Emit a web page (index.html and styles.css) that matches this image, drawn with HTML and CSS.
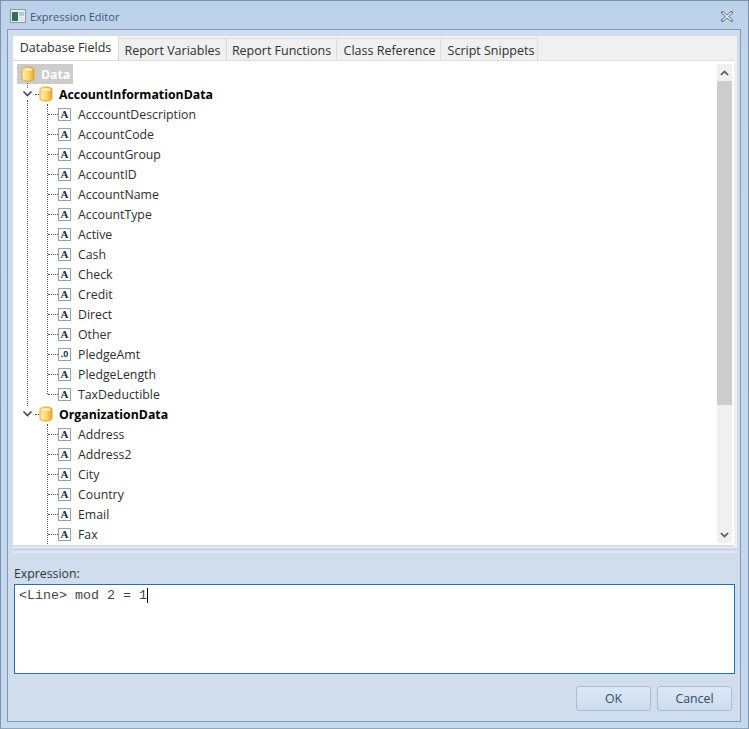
FILE: index.html
```html
<!DOCTYPE html>
<html lang="en">
<head>
<meta charset="utf-8">
<title>Expression Editor</title>
<link rel="stylesheet" href="styles.css">
</head>
<body>
<svg class="defs" width="0" height="0" aria-hidden="true">
  <defs>
    <linearGradient id="dbfill" x1="0" y1="0" x2="1" y2="0">
      <stop offset="0" stop-color="#fff2b8"/>
      <stop offset="0.55" stop-color="#fbd566"/>
      <stop offset="1" stop-color="#eba92e"/>
    </linearGradient>
    <symbol id="db" viewBox="0 0 14 16">
      <path d="M1 3.500C1 1.900 3.700 1 7 1s6 .9 6 2.500v9C13 14.100 10.300 15 7 15s-6-.9-6-2.500z" fill="url(#dbfill)" stroke="#e3a32e"/>
      <ellipse cx="7" cy="3.600" rx="4.500" ry="1.700" fill="#fff6d2" stroke="#ecc060" stroke-width=".6"/>
    </symbol>
  </defs>
</svg>
<div class="window">
  <header class="titlebar">
    <svg class="appicon" width="16" height="14" viewBox="0 0 16 14"><rect x=".5" y=".5" width="15" height="13" fill="#e8eeee" stroke="#8d9a9a"/><rect x="2" y="3" width="6" height="9" fill="#2f6f63"/><rect x="9" y="3" width="5" height="4" fill="#b9c6d6"/><rect x="9" y="8" width="5" height="4" fill="#dfe6ea"/></svg>
    <span class="title">Expression Editor</span>
    <svg class="close" width="12" height="11" viewBox="0 0 12 11"><path d="M1.500 1.500l9 8M10.500 1.500l-9 8" stroke="#5f7488" stroke-width="3" stroke-linecap="square"/><path d="M1.500 1.500l9 8M10.500 1.500l-9 8" stroke="#f4f7fa" stroke-width="1.300"/></svg>
  </header>
  <main class="panel">
    <section class="tabs">
      <nav class="tabstrip">
        <span class="tab active">Database Fields</span>
        <span class="tab t2">Report Variables</span>
        <span class="tab t3">Report Functions</span>
        <span class="tab t4">Class Reference</span>
        <span class="tab t5">Script Snippets</span>
      </nav>
      <div class="tabbody">
        <div class="tree">
          <div class="row root"><span class="rootsel"><svg class="dbicon"><use href="#db"/></svg><b>Data</b></span></div>
          <div class="group g1">
            <div class="row parent"><svg class="chev" width="11" height="8" viewBox="0 0 11 8"><path d="M1.500 1.500l4 4 4-4" fill="none" stroke="#444" stroke-width="1.600"/></svg><span class="hdots"></span><svg class="dbicon"><use href="#db"/></svg><b>AccountInformationData</b></div>
            <div class="children">
              <div class="row leaf"><span class="ficon">A</span>AcccountDescription</div>
              <div class="row leaf"><span class="ficon">A</span>AccountCode</div>
              <div class="row leaf"><span class="ficon">A</span>AccountGroup</div>
              <div class="row leaf"><span class="ficon">A</span>AccountID</div>
              <div class="row leaf"><span class="ficon">A</span>AccountName</div>
              <div class="row leaf"><span class="ficon">A</span>AccountType</div>
              <div class="row leaf"><span class="ficon">A</span>Active</div>
              <div class="row leaf"><span class="ficon">A</span>Cash</div>
              <div class="row leaf"><span class="ficon">A</span>Check</div>
              <div class="row leaf"><span class="ficon">A</span>Credit</div>
              <div class="row leaf"><span class="ficon">A</span>Direct</div>
              <div class="row leaf"><span class="ficon">A</span>Other</div>
              <div class="row leaf"><span class="ficon num">.0</span>PledgeAmt</div>
              <div class="row leaf"><span class="ficon">A</span>PledgeLength</div>
              <div class="row leaf"><span class="ficon">A</span>TaxDeductible</div>
            </div>
          </div>
          <div class="group g2">
            <div class="row parent"><svg class="chev" width="11" height="8" viewBox="0 0 11 8"><path d="M1.500 1.500l4 4 4-4" fill="none" stroke="#444" stroke-width="1.600"/></svg><span class="hdots"></span><svg class="dbicon"><use href="#db"/></svg><b>OrganizationData</b></div>
            <div class="children open">
              <div class="row leaf"><span class="ficon">A</span>Address</div>
              <div class="row leaf"><span class="ficon">A</span>Address2</div>
              <div class="row leaf"><span class="ficon">A</span>City</div>
              <div class="row leaf"><span class="ficon">A</span>Country</div>
              <div class="row leaf"><span class="ficon">A</span>Email</div>
              <div class="row leaf"><span class="ficon">A</span>Fax</div>
            </div>
          </div>
        </div>
        <div class="scrollbar">
          <span class="sbtn"><svg width="9" height="6" viewBox="0 0 9 6"><path d="M1 5l3.500-3.500L8 5" fill="none" stroke="#555" stroke-width="1.700"/></svg></span>
          <span class="thumb"></span>
          <span class="track"></span>
          <span class="sbtn"><svg width="9" height="6" viewBox="0 0 9 6"><path d="M1 1l3.500 3.500L8 1" fill="none" stroke="#555" stroke-width="1.700"/></svg></span>
        </div>
      </div>
    </section>
    <div class="splitter"></div>
    <section class="expression">
      <label class="exlabel">Expression:</label>
      <div class="exbox"><span class="code">&lt;Line&gt; mod 2 = 1</span><span class="caret"></span></div>
    </section>
    <footer class="buttons">
      <span class="btn">OK</span>
      <span class="btn">Cancel</span>
    </footer>
  </main>
</div>
</body>
</html>
```
FILE: styles.css
```css
* { box-sizing: border-box; }
html, body { margin: 0; padding: 0; }
body {
  width: 749px;
  height: 729px;
  overflow: hidden;
  font-family: "Open Sans", "Noto Sans", sans-serif;
  font-size: 12.3px;
  color: #2e2e2e;
}
.defs { position: absolute; }
.window {
  width: 749px;
  height: 729px;
  border: 1px solid #7d93ab;
  border-bottom-color: #8fa5bd;
  background: linear-gradient(#bbd1ea, #c3d6ec 60px, #c6d8ed);
  padding: 0 7px 6px 6px;
  display: flex;
  flex-direction: column;
}
.titlebar {
  height: 28px;
  flex: none;
  display: flex;
  align-items: center;
  padding: 2px 8px 0 3px;
}
.appicon { margin-right: 4px; }
.title { color: #3d566f; font-size: 11px; flex: 1; }
.panel {
  flex: 1;
  border: 1px solid #7f98b3;
  background: #cfdded;
  padding: 6px 3px 0 5px;
  display: flex;
  flex-direction: column;
}
.tabs {
  height: 512px;
  flex: none;
  background: #f0f0f0;
  display: flex;
  flex-direction: column;
}
.tabstrip {
  height: 24px;
  flex: none;
  display: flex;
  align-items: flex-end;
}
.tab {
  height: 22px;
  width: 108px;
  border: 1px solid #dcdcdc;
  border-left: 0;
  border-bottom: 0;
  background: #f0f0f0;
  display: flex;
  align-items: center;
  justify-content: center;
  white-space: nowrap;
  font-size: 12.5px;
  padding-top: 1px;
}
.tab.active {
  height: 24px;
  width: 106px;
  background: #fff;
  border: 0;
  border-right: 1px solid #dcdcdc;
  padding: 0 0 1px;
}
.t3 { width: 110px; }
.t4 { width: 104px; padding-left: 2px; }
.t5 { width: 97px; padding-left: 4px; }
.tabbody {
  height: 487px;
  flex: none;
  margin-right: 3px;
  background: #fff;
  border-top: 1px solid #dcdcdc;
  border-bottom: 2px solid #dcdcdc;
  padding: 3px 2px 2px 4px;
  display: flex;
}
.tree {
  flex: 1;
  overflow: hidden;
  height: 480px;
}
.row {
  height: 20px;
  display: flex;
  align-items: center;
  white-space: nowrap;
  position: relative;
}
.dbicon { width: 14px; height: 16px; flex: none; }
.rootsel {
  display: flex;
  align-items: center;
  background: #cccccc;
  color: #fff;
  height: 20px;
  width: 56px;
  padding-left: 4px;
  gap: 6px;
}
.row b { font-weight: 700; }
.parent { padding-left: 5px; color: #000; }
.parent b { margin-left: 6px; }
.chev { flex: none; }
.hdots { width: 4px; margin-left: 2px; border-top: 1px dotted #555; }
.parent .dbicon { margin-left: 0; }
.group { position: relative; }
.g1::before {
  content: "";
  position: absolute;
  left: 10px;
  top: -1px;
  width: 0;
  height: 5px;
  border-left: 1px dotted #555;
}
.g1::after {
  content: "";
  position: absolute;
  left: 10px;
  top: 16px;
  bottom: -2px;
  width: 0;
  border-left: 1px dotted #555;
}
.children { position: relative; }
.children::before {
  content: "";
  position: absolute;
  left: 30px;
  top: 0;
  bottom: 10px;
  width: 0;
  border-left: 1px dotted #555;
}
.children.open::before { bottom: 0; }
.leaf { padding-left: 41px; }
.leaf::before {
  content: "";
  position: absolute;
  left: 31px;
  top: 10px;
  width: 10px;
  border-top: 1px dotted #555;
}
.ficon {
  width: 13px;
  height: 13px;
  flex: none;
  margin-right: 7px;
  border: 1px solid #8ea3b8;
  background: #fff;
  color: #1d2a3a;
  font-family: "Liberation Serif", serif;
  font-weight: 700;
  font-size: 11px;
  line-height: 11px;
  text-align: center;
}
.ficon.num { font-family: "Liberation Sans", sans-serif; font-size: 9px; }
.scrollbar {
  width: 15px;
  flex: none;
  display: flex;
  flex-direction: column;
  background: #f0f0f0;
}
.sbtn {
  height: 17px;
  flex: none;
  display: flex;
  align-items: center;
  justify-content: center;
}
.thumb { height: 324px; flex: none; background: #cdcdcd; }
.track { flex: 1; }
.splitter {
  height: 5px;
  flex: none;
  background: linear-gradient(#c9d8ea 3px, #e2eaf4 3px);
}
.expression {
  padding: 13px 0 0 1px;
  flex: none;
}
.exlabel { display: block; height: 18px; line-height: 16px; color: #333; }
.exbox {
  height: 90px;
  width: 721px;
  background: #fff;
  border: 1px solid #1f72b5;
  padding: 3px 0 0 4px;
  display: flex;
  align-items: flex-start;
  font-family: "Liberation Mono", monospace;
  font-size: 13.33px;
  line-height: 16px;
  color: #444;
}
.code { white-space: pre; }
.caret { width: 1px; height: 15px; background: #000; }
.buttons {
  flex: 1;
  display: flex;
  justify-content: flex-end;
  gap: 6px;
  padding: 12px 5px 0 0;
}
.btn {
  width: 75px;
  height: 25px;
  border: 1px solid #a9bdd2;
  border-radius: 3px;
  background: linear-gradient(#dce8f5, #cddcee);
  display: flex;
  align-items: center;
  justify-content: center;
  color: #2d4a66;
}
```
